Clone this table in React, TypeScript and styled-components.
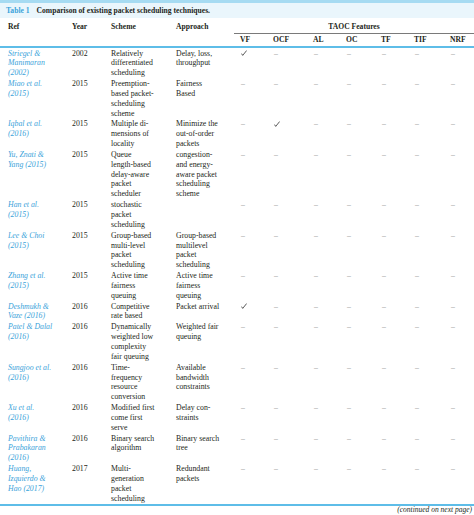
import React from 'react';
import styled, { createGlobalStyle } from 'styled-components';

const GlobalStyle = createGlobalStyle`
    body {
        margin: 0;
        background: #FFFFFF;
        font-family: "Liberation Serif", "Times New Roman", serif;
        color: #231F20;
    }
`

interface Row {
    ref: string[],
    year: string,
    scheme: string[],
    approach: string[],
    checks: number[]
};

const features = ['VF', 'OCF', 'AL', 'OC', 'TF', 'TIF', 'NRF'];

const rows: Row[] = [
    { ref: ['Striegel &', 'Manimaran', '(2002)'], year: '2002', scheme: ['Relatively', 'differentiated', 'scheduling'], approach: ['Delay, loss,', 'throughput'], checks: [0] },
    { ref: ['Miao et al.', '(2015)'], year: '2015', scheme: ['Preemption-', 'based packet-', 'scheduling', 'scheme'], approach: ['Fairness', 'Based'], checks: [] },
    { ref: ['Iqbal et al.', '(2016)'], year: '2015', scheme: ['Multiple di-', 'mensions of', 'locality'], approach: ['Minimize the', 'out-of-order', 'packets'], checks: [1] },
    { ref: ['Yu, Znati &', 'Yang (2015)'], year: '2015', scheme: ['Queue', 'length-based', 'delay-aware', 'packet', 'scheduler'], approach: ['congestion-', 'and energy-', 'aware packet', 'scheduling', 'scheme'], checks: [] },
    { ref: ['Han et al.', '(2015)'], year: '2015', scheme: ['stochastic', 'packet', 'scheduling'], approach: [], checks: [] },
    { ref: ['Lee & Choi', '(2015)'], year: '2015', scheme: ['Group-based', 'multi-level', 'packet', 'scheduling'], approach: ['Group-based', 'multilevel', 'packet', 'scheduling'], checks: [] },
    { ref: ['Zhang et al.', '(2015)'], year: '2015', scheme: ['Active time', 'fairness', 'queuing'], approach: ['Active time', 'fairness', 'queuing'], checks: [] },
    { ref: ['Deshmukh &', 'Vaze (2016)'], year: '2016', scheme: ['Competitive', 'rate based'], approach: ['Packet arrival'], checks: [0] },
    { ref: ['Patel & Dalal', '(2016)'], year: '2016', scheme: ['Dynamically', 'weighted low', 'complexity', 'fair queuing'], approach: ['Weighted fair', 'queuing'], checks: [] },
    { ref: ['Sungjoo et al.', '(2016)'], year: '2016', scheme: ['Time-', 'frequency', 'resource', 'conversion'], approach: ['Available', 'bandwidth', 'constraints'], checks: [] },
    { ref: ['Xu et al.', '(2016)'], year: '2016', scheme: ['Modified first', 'come first', 'serve'], approach: ['Delay con-', 'straints'], checks: [] },
    { ref: ['Pavithira &', 'Prabakaran', '(2016)'], year: '2016', scheme: ['Binary search', 'algorithm'], approach: ['Binary search', 'tree'], checks: [] },
    { ref: ['Huang,', 'Izquierdo &', 'Hao (2017)'], year: '2017', scheme: ['Multi-', 'generation', 'packet', 'scheduling'], approach: ['Redundant', 'packets'], checks: [] },
];

const Page = styled.div`
    width: 474px;
    overflow: hidden;
`

const Caption = styled.div`
    border-top: 3px solid #A6DBF2;
    background-color: #EAF6FC;
    height: 15px;
    display: flex;
    align-items: center;
    padding-left: 6px;
    font-size: 7.6px;
    font-weight: 700;
    white-space: nowrap;
`

const Label = styled.span`
    color: #3BA3DA;
    margin-right: 7px;
`

const Table = styled.table`
    width: 474px;
    table-layout: fixed;
    border-collapse: collapse;
`

const Col = styled.col<{ $w: number }>`
    width: ${p => p.$w}px;
`

const Head = styled.th<{ $pad?: number }>`
    font-size: 7.6px;
    font-weight: 700;
    text-align: left;
    vertical-align: top;
    padding: 0 0 0 ${p => p.$pad ?? 0}px;
    line-height: 9.7px;
    white-space: nowrap;
`

const TopHead = styled(Head)`
    height: 11px;
    padding-top: 4px;
`

const GroupHead = styled(Head)`
    text-align: center;
    border-bottom: 1.5px solid #7A7A7A;
    height: 11px;
    padding-top: 4px;
`

const SubHead = styled(Head)`
    padding-top: 1px;
    height: 11px;
`

const SubRow = styled.tr`
    border-bottom: 2px solid #5EBDE8;
`

const BodyRow = styled.tr<{ $last?: boolean }>`
    border-bottom: ${p => p.$last ? '2px solid #5EBDE8' : 'none'};
`

const Cell = styled.td<{ $pad?: number, $ref?: boolean }>`
    font-size: 7.8px;
    line-height: 9.85px;
    vertical-align: top;
    padding: 0.5px 0 0.5px ${p => p.$pad ?? 0}px;
    white-space: nowrap;
    color: ${p => p.$ref ? '#3BA3DA' : '#231F20'};
    font-style: ${p => p.$ref ? 'italic' : 'normal'};
`

const Dash = styled.span`
    color: #8C8C8C;
`

const CheckIcon = styled.svg`
    display: block;
    margin-top: 1.5px;
`

const Footer = styled.div`
    text-align: right;
    font-style: italic;
    font-weight: 400;
    font-size: 7.5px;
    line-height: 8px;
    padding-right: 2px;
`

const Check = () => (
    <CheckIcon width="6" height="6" viewBox="0 0 7 7">
        <path d="M0.6 4.2 L2 6.3 L6.6 0.6" fill="none" stroke="#2A2A2A" strokeWidth="0.9" strokeLinejoin="round" />
    </CheckIcon>
)

const Lines = ({ items }: { items: string[] }) => (
    <>
        {items.map((t, i) => <div key={i}>{t}</div>)}
    </>
)

const App = () => {
    return (
        <Page>
            <GlobalStyle />
            <Caption>
                <Label>Table 1</Label>
                Comparison of existing packet scheduling techniques.
            </Caption>
            <Table>
                <colgroup>
                    <Col $w={72} />
                    <Col $w={39} />
                    <Col $w={65} />
                    <Col $w={58} />
                    <Col $w={33} />
                    <Col $w={40} />
                    <Col $w={33} />
                    <Col $w={35} />
                    <Col $w={33} />
                    <Col $w={36} />
                    <Col $w={30} />
                </colgroup>
                <thead>
                    <tr>
                        <TopHead $pad={8}>Ref</TopHead>
                        <TopHead>Year</TopHead>
                        <TopHead>Scheme</TopHead>
                        <TopHead>Approach</TopHead>
                        <GroupHead colSpan={7}>TAOC Features</GroupHead>
                    </tr>
                    <SubRow>
                        <SubHead colSpan={4} />
                        {features.map(f => <SubHead key={f} $pad={6}>{f}</SubHead>)}
                    </SubRow>
                </thead>
                <tbody>
                    {rows.map((r, i) => (
                        <BodyRow key={i} $last={i === rows.length - 1}>
                            <Cell $pad={8} $ref><Lines items={r.ref} /></Cell>
                            <Cell>{r.year}</Cell>
                            <Cell><Lines items={r.scheme} /></Cell>
                            <Cell><Lines items={r.approach} /></Cell>
                            {features.map((f, j) => (
                                <Cell key={f} $pad={7}>
                                    {r.checks.includes(j) ? <Check /> : <Dash>–</Dash>}
                                </Cell>
                            ))}
                        </BodyRow>
                    ))}
                </tbody>
            </Table>
            <Footer>(continued on next page)</Footer>
        </Page>
    )
}

export default App;
